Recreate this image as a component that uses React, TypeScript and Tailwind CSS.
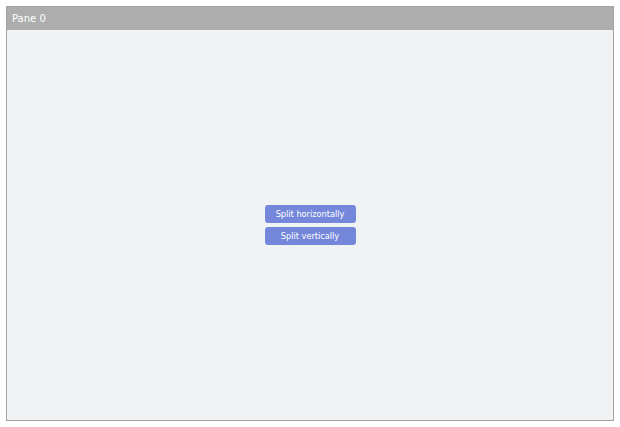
import React from "react";

export default function App() {
  return (
    <div className="w-[620px] h-[427px] bg-white p-[6px] box-border" style={{ fontFamily: '"DejaVu Sans", sans-serif' }}>
      <div className="w-full h-[415px] border border-[#a3a3a3] flex flex-col box-border">
        <div className="h-[23px] bg-[#acadac] flex items-center px-[5px] text-white text-[10px] leading-none shrink-0">
          Pane 0
        </div>
        <div className="flex-1 bg-[#f1f2f4] flex flex-col items-center justify-center gap-[4px]">
          <button className="w-[91px] h-[18px] rounded-[3px] bg-[#7487db] text-white text-[8.2px] leading-none flex items-center justify-center">
            Split horizontally
          </button>
          <button className="w-[91px] h-[18px] rounded-[3px] bg-[#7487db] text-white text-[8.2px] leading-none flex items-center justify-center">
            Split vertically
          </button>
        </div>
      </div>
    </div>
  );
}
